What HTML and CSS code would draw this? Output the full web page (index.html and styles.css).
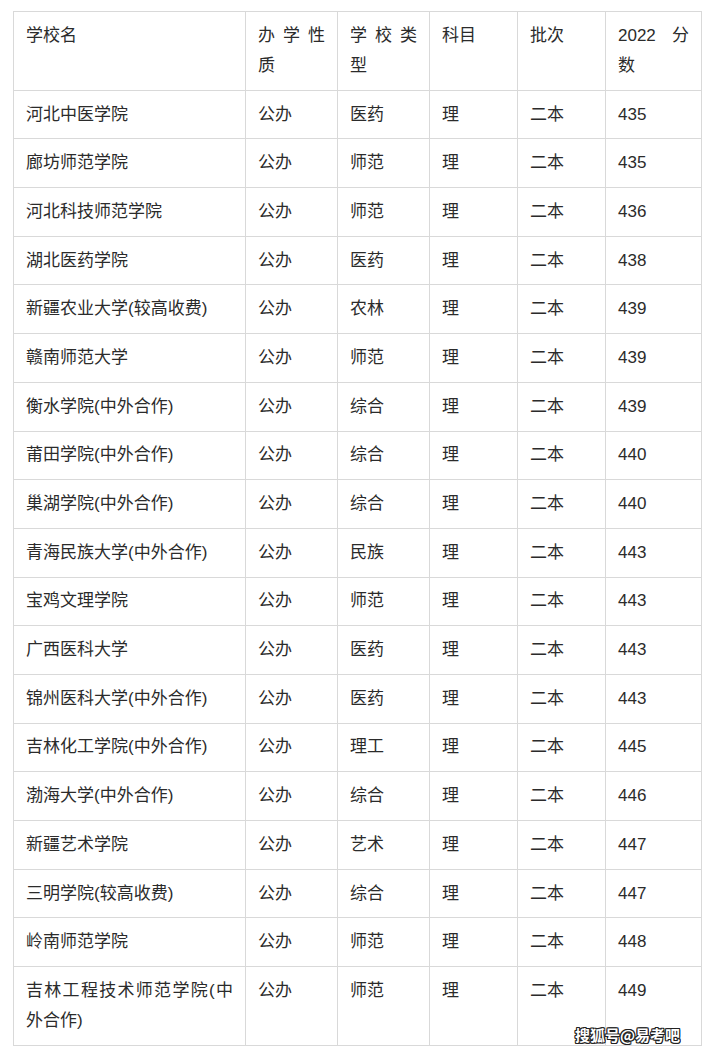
FILE: index.html
```html
<!DOCTYPE html>
<html lang="zh-CN">
<head>
<meta charset="utf-8">
<link rel="stylesheet" href="styles.css">
</head>
<body>
<div class="page">
<table class="score-table">
<colgroup>
<col class="c1"><col class="c2"><col class="c3"><col class="c4"><col class="c5"><col class="c6">
</colgroup>
<thead>
<tr><th>学校名</th><th>办 学 性 质</th><th>学 校 类 型</th><th>科目</th><th>批次</th><th>2022 分数</th></tr>
</thead>
<tbody>
<tr><td>河北中医学院</td><td>公办</td><td>医药</td><td>理</td><td>二本</td><td>435</td></tr>
<tr><td>廊坊师范学院</td><td>公办</td><td>师范</td><td>理</td><td>二本</td><td>435</td></tr>
<tr><td>河北科技师范学院</td><td>公办</td><td>师范</td><td>理</td><td>二本</td><td>436</td></tr>
<tr><td>湖北医药学院</td><td>公办</td><td>医药</td><td>理</td><td>二本</td><td>438</td></tr>
<tr><td>新疆农业大学(较高收费)</td><td>公办</td><td>农林</td><td>理</td><td>二本</td><td>439</td></tr>
<tr><td>赣南师范大学</td><td>公办</td><td>师范</td><td>理</td><td>二本</td><td>439</td></tr>
<tr><td>衡水学院(中外合作)</td><td>公办</td><td>综合</td><td>理</td><td>二本</td><td>439</td></tr>
<tr><td>莆田学院(中外合作)</td><td>公办</td><td>综合</td><td>理</td><td>二本</td><td>440</td></tr>
<tr><td>巢湖学院(中外合作)</td><td>公办</td><td>综合</td><td>理</td><td>二本</td><td>440</td></tr>
<tr><td>青海民族大学(中外合作)</td><td>公办</td><td>民族</td><td>理</td><td>二本</td><td>443</td></tr>
<tr><td>宝鸡文理学院</td><td>公办</td><td>师范</td><td>理</td><td>二本</td><td>443</td></tr>
<tr><td>广西医科大学</td><td>公办</td><td>医药</td><td>理</td><td>二本</td><td>443</td></tr>
<tr><td>锦州医科大学(中外合作)</td><td>公办</td><td>医药</td><td>理</td><td>二本</td><td>443</td></tr>
<tr><td>吉林化工学院(中外合作)</td><td>公办</td><td>理工</td><td>理</td><td>二本</td><td>445</td></tr>
<tr><td>渤海大学(中外合作)</td><td>公办</td><td>综合</td><td>理</td><td>二本</td><td>446</td></tr>
<tr><td>新疆艺术学院</td><td>公办</td><td>艺术</td><td>理</td><td>二本</td><td>447</td></tr>
<tr><td>三明学院(较高收费)</td><td>公办</td><td>综合</td><td>理</td><td>二本</td><td>447</td></tr>
<tr><td>岭南师范学院</td><td>公办</td><td>师范</td><td>理</td><td>二本</td><td>448</td></tr>
<tr><td>吉林工程技术师范学院(中外合作)</td><td>公办</td><td>师范</td><td>理</td><td>二本</td><td>449</td></tr>
</tbody>
</table>
<div class="watermark">搜狐号@易考吧</div>
</div>
</body>
</html>
```

FILE: styles.css
```css
html, body {
  margin: 0;
  padding: 0;
  background: #ffffff;
}
.page {
  position: relative;
  padding: 11px 0 0 13px;
  width: 688px;
}
.score-table {
  border-collapse: collapse;
  table-layout: fixed;
  width: 688px;
  font-family: "Liberation Sans", "Noto Sans CJK SC", sans-serif;
  font-size: 17px;
  line-height: 30px;
  color: #2b2b2b;
}
.c1 { width: 232px; }
.c2 { width: 92px; }
.c3 { width: 92px; }
.c4 { width: 88px; }
.c5 { width: 88px; }
.c6 { width: 96px; }
.score-table th,
.score-table td {
  border: 1px solid #d9d9d9;
  padding: 8.85px 12px;
  vertical-align: top;
  text-align: justify;
  font-weight: normal;
  word-break: break-all;
}
.watermark {
  position: absolute;
  right: 21px;
  bottom: 2px;
  font-family: "Noto Sans CJK SC", sans-serif;
  font-size: 15px;
  font-weight: bold;
  line-height: 18px;
  color: #ffffff;
  text-shadow: -1px -1px 0 #222, 1px -1px 0 #222, -1px 1px 0 #222, 1px 1px 0 #222, 0 1px 0 #222, 0 -1px 0 #222, 1px 0 0 #222, -1px 0 0 #222;
}
```
